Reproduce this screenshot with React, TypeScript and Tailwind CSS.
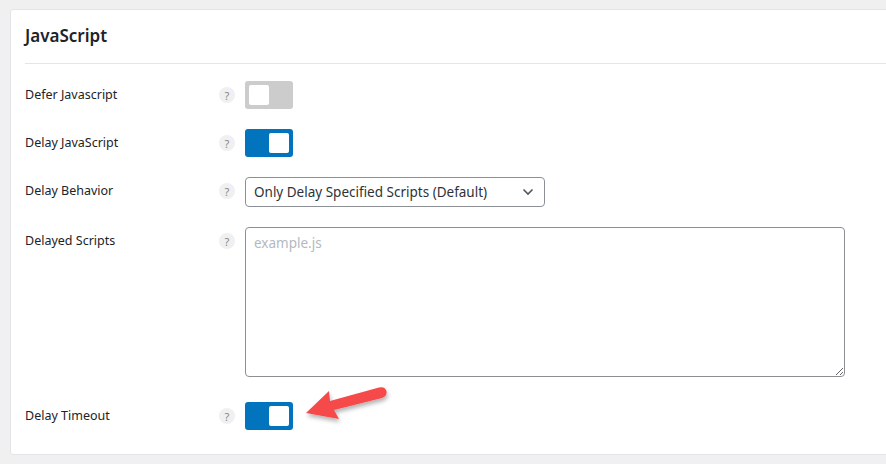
import React from "react";

function Help() {
  return (
    <span className="mt-[6px] flex h-4 w-4 shrink-0 items-center justify-center rounded-full bg-[#f0f0f1] text-[11px] leading-none text-[#82878c]">
      ?
    </span>
  );
}

function Toggle({ on }: { on: boolean }) {
  return (
    <div
      className={`flex h-[28px] w-[48px] items-center rounded-[3px] px-1 ${
        on ? "justify-end bg-[#0274be]" : "justify-start bg-[#cccccc]"
      }`}
    >
      <div className="h-5 w-5 rounded-[2px] bg-white" />
    </div>
  );
}

function Row({ label, children }: { label: string; children: React.ReactNode }) {
  return (
    <div className="flex items-start">
      <div className="w-[194px] shrink-0 pt-[6px] text-[12.5px] leading-4 text-[#1d2327]">{label}</div>
      <Help />
      <div className="ml-[10px]">{children}</div>
    </div>
  );
}

export default function App() {
  return (
    <div
      className="h-[464px] w-[886px] overflow-hidden bg-[#f0f0f1] pl-[10px] pt-[9px]"
      style={{ fontFamily: '"Noto Sans", "Open Sans", Arial, sans-serif' }}
    >
      <div className="relative h-[446px] w-[890px] rounded-[3px] border border-[#e2e4e7] bg-white pl-[14px]">
        <h2 className="h-[53px] pt-[16px] text-[17px] font-semibold leading-5 text-[#1d2327]">JavaScript</h2>
        <div className="h-px bg-[#e5e5e5]" />
        <div className="flex flex-col gap-5 pt-[17px]">
          <Row label="Defer Javascript">
            <Toggle on={false} />
          </Row>
          <Row label="Delay JavaScript">
            <Toggle on />
          </Row>
          <Row label="Delay Behavior">
            <div className="flex h-[30px] w-[300px] items-center justify-between rounded-[4px] border border-[#8c8f94] pl-2 pr-[10px] text-[13.5px] text-[#2c3338]">
              <span>Only Delay Specified Scripts (Default)</span>
              <svg width="12" height="8" viewBox="0 0 12 8" fill="none">
                <path d="M1.5 1.5 6 6l4.5-4.5" stroke="#50575e" strokeWidth="1.6" />
              </svg>
            </div>
          </Row>
          <Row label="Delayed Scripts">
            <textarea
              className="block h-[150px] w-[600px] resize rounded-[4px] border border-[#8c8f94] px-2 py-[5px] text-[13.5px] leading-5 text-[#2c3338] outline-none placeholder:text-[#b4b9be]"
              placeholder="example.js"
            />
          </Row>
          <div className="mt-[5px]">
            <Row label="Delay Timeout">
              <Toggle on />
            </Row>
          </div>
        </div>
        <svg
          className="absolute left-[288px] top-[374px]"
          width="106"
          height="54"
          viewBox="0 0 106 54"
        >
          <defs>
            <filter id="sh" x="-20%" y="-20%" width="150%" height="160%">
              <feDropShadow dx="1" dy="3" stdDeviation="2" floodColor="#000" floodOpacity="0.3" />
            </filter>
          </defs>
          <g filter="url(#sh)">
            <path
              d="M7 29 L30 7 L31 17 L80 3.5 Q86 2 87.5 7 Q88.5 12 83 14 L35 26 L40 35 Z"
              fill="#f64949"
            />
          </g>
        </svg>
      </div>
    </div>
  );
}
